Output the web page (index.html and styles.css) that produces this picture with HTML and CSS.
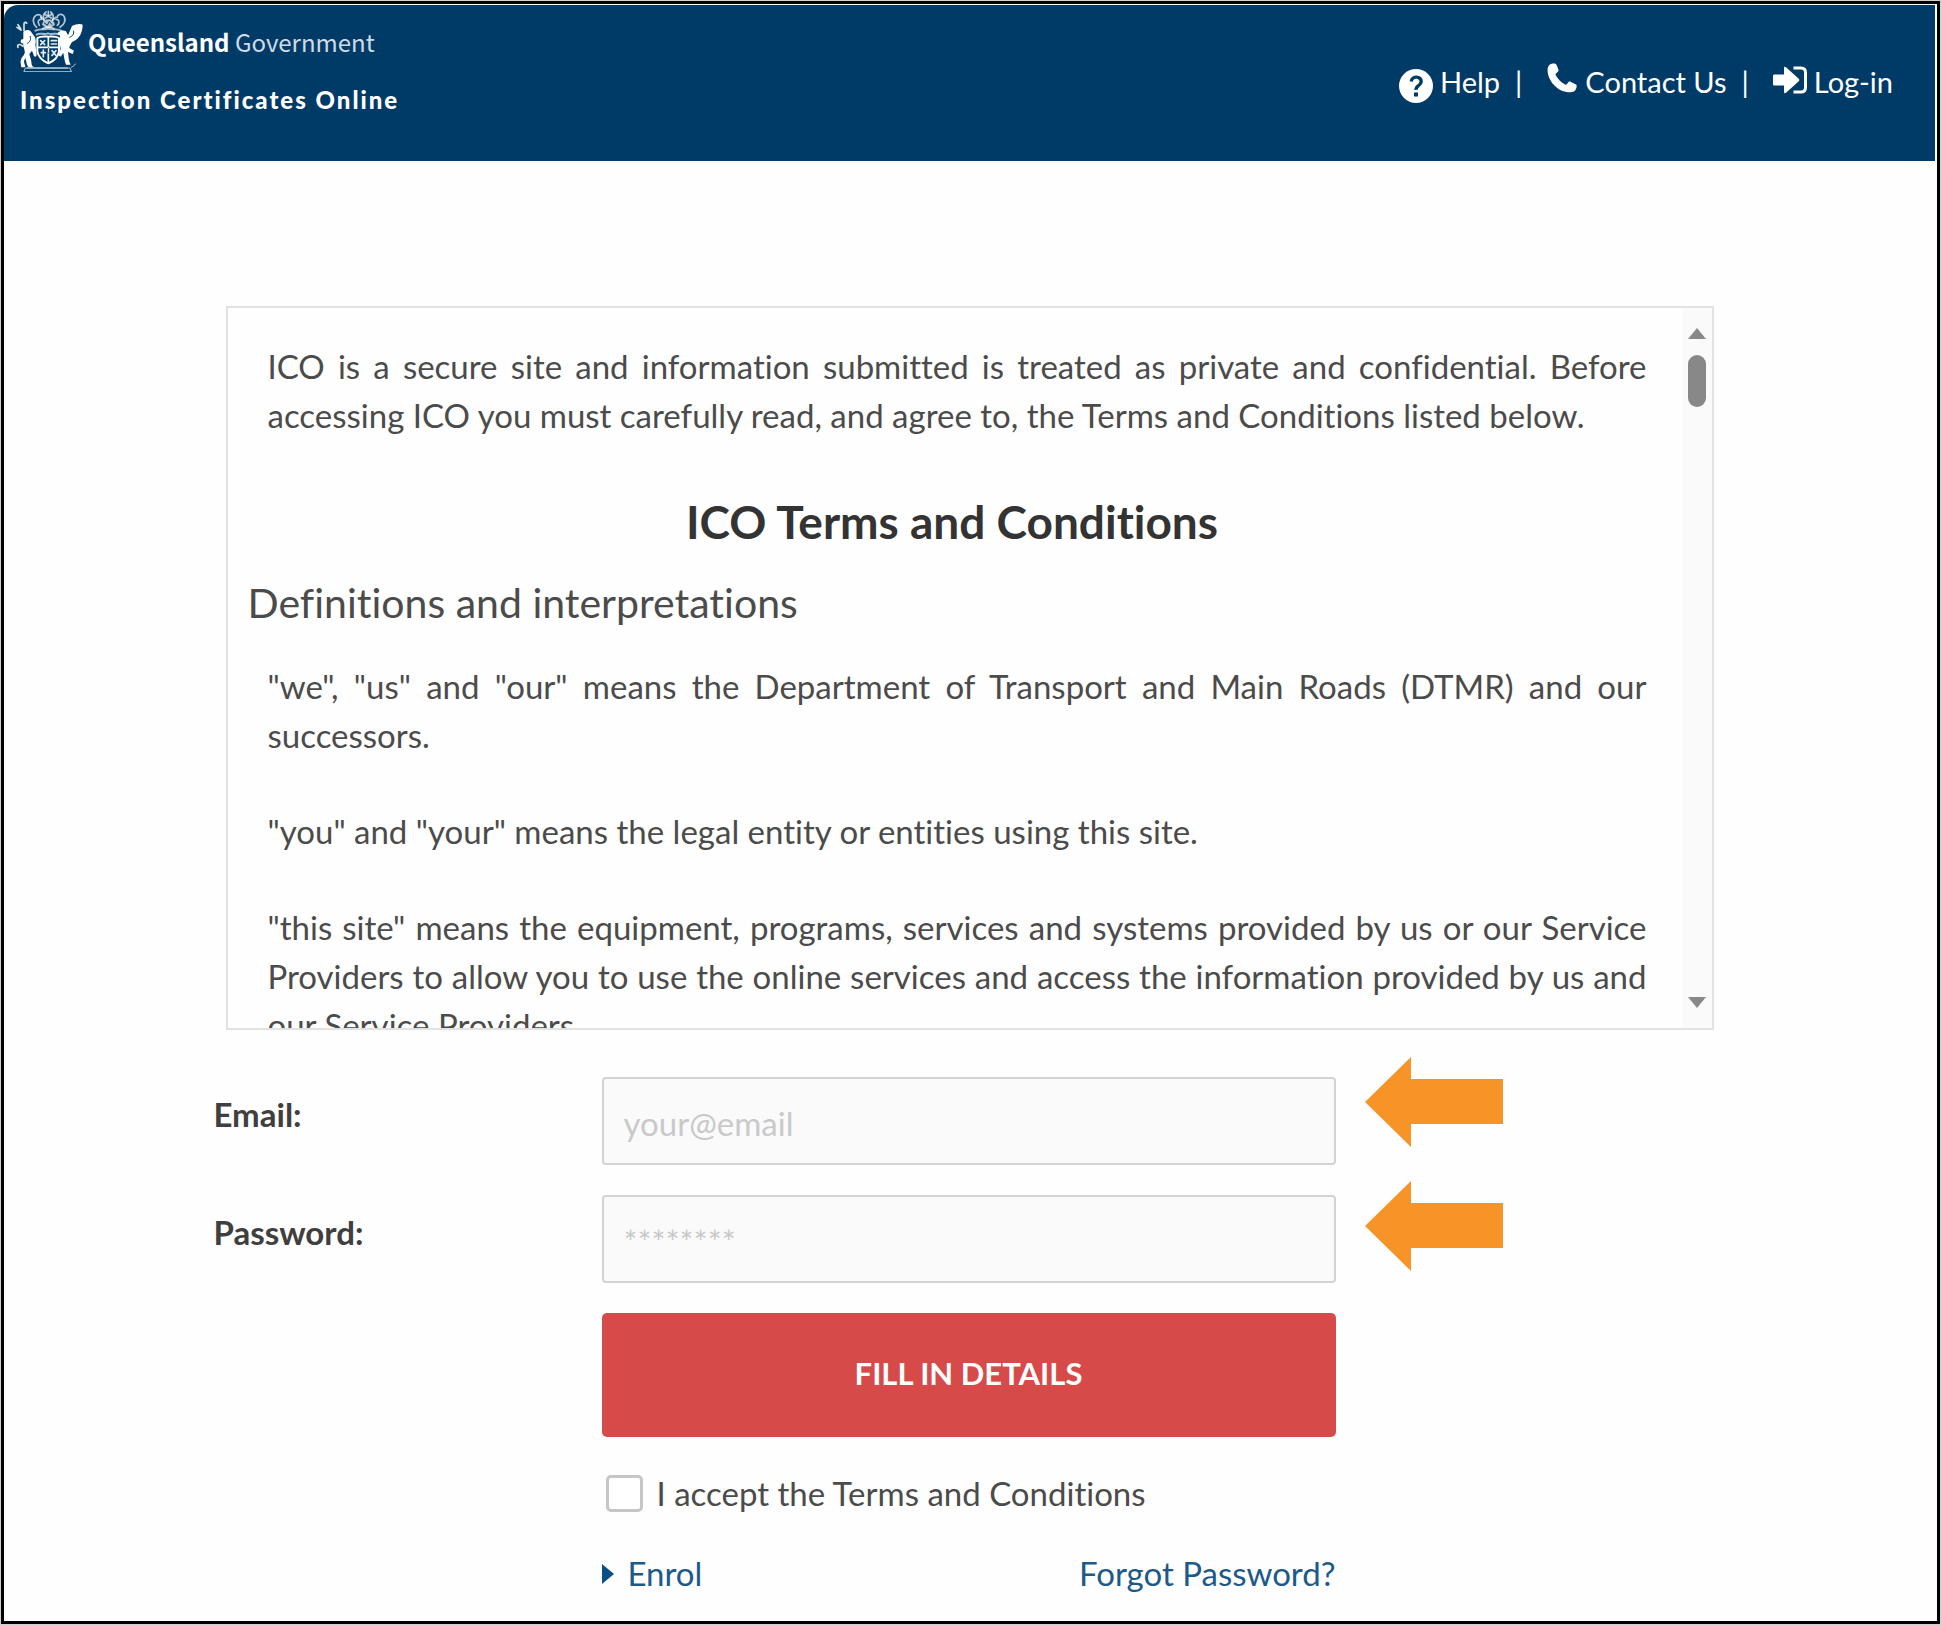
FILE: index.html
```html
<!DOCTYPE html>
<html lang="en">
<head>
<meta charset="utf-8">
<meta name="viewport" content="width=device-width, initial-scale=1">
<title>Inspection Certificates Online</title>
<link rel="stylesheet" href="styles.css">
</head>
<body>
<div class="page">
  <header class="site-header">
    <div class="brand">
      <div class="brand-logo">
        <svg class="crest" viewBox="0 0 201 186" aria-hidden="true">
          <g fill="none" stroke="#fff" stroke-linecap="round" stroke-linejoin="round">
            <path stroke-width="5" opacity=".7" d="M62 52C50 42 48 24 60 16c8-5 18 0 16 8M132 52c14-8 20-24 10-36-8-6-18-2-18 6M70 46c-6-10-4-18 6-18M124 46c8-8 6-18-4-18M84 30c-4-10-2-18 6-24M110 30c4-10 2-18-6-24M97 4v14M80 56c8-6 26-6 34 0"/>
            <path stroke-width="6" opacity=".65" d="M58 62c16-8 28-2 38-6 12 4 24-2 40 6M62 74c14-8 20 2 34-4 14 6 22-4 36 4M74 22l10 8M120 22l-10 8M88 14l18 10M106 14L88 24"/>
            <path stroke-width="6" d="M64 84c10-6 24-4 33-4 10 0 22-2 32 4v40c-2 18-14 28-32 36-18-8-30-18-33-36z"/>
            <path stroke-width="5" d="M97 82v74M66 112h62"/>
            <path stroke-width="5" opacity=".9" d="M74 92l12 12M86 92L74 104M106 92h16M106 102h16M82 120v20M76 128h12M108 122l12 14M120 122l-12 14"/>
            <path stroke-width="3" opacity=".7" d="M26 170c-2-4-8-4-10-12M24 184l4-10h134l4 10zM34 174h120M166 172c4-4 10-4 12-10"/>
          </g>
          <path fill="#fff" opacity=".7" d="M78 44c2-10 8-16 19-16s18 6 20 16c-6 6-10 4-12 10H90c-2-6-8-4-12-10z"/>
          <path fill="none" stroke="#003b68" stroke-width="3" d="M84 38l10 8 6-12 8 10"/>
          <path fill="#fff" d="M22 66c6-8 16-8 22-2l12 16c4 8 4 16 2 24l4 28c0 8-4 10-8 6l-6-16-8 10 4 14c4 10 0 20 10 26H38c-8-8-6-20-10-28l-4 10c0 8 4 10 4 18H16c-2-12-4-20 2-30 6-8 10-12 8-20-2-10-6-14-4-22-6 2-8-2-8-6 0-6 4-6 8-8z"/>
          <path fill="none" stroke="#fff" stroke-width="5" stroke-linecap="round" opacity=".85" d="M6 44l8 12M3 52l12 8M24 62V42c0-6 6-6 8-2M20 108c-10-8-18-4-14 4"/>
          <path fill="#fff" d="M168 48c10-6 26-8 32-4 0 14-4 28-12 38-6 8-14 12-20 14-4 8-8 12-8 18l14 8-4 10-14-6c2 16 2 28 8 38h-14c-4-10-6-24-8-36l-8 12-6-4 6-20-4-22c0-8 4-14 2-20-6 2-10-4-4-8 6-6 16-6 22-2l6 12z"/>
          <path fill="none" stroke="#003b68" stroke-width="3" d="M172 62c4 10-4 18-12 20M42 78c4 10 0 18-8 22M98 112c-6 6-6 14 0 18"/>
        </svg>
        <span class="gov"><strong>Queensland</strong> <span class="gov-light">Government</span></span>
      </div>
      <div class="app-name">Inspection Certificates Online</div>
    </div>
    <nav class="site-nav" aria-label="Support">
      <a class="nav-link" href="#help">
        <svg class="nav-icon help" viewBox="0 0 34 34" aria-hidden="true"><circle cx="17" cy="17" r="17" fill="#fff"/><path d="M12.200 12.500c.8-6 10.200-5.600 10 .2-.2 4-5.400 3.800-5.200 8.200" fill="none" stroke="#003b68" stroke-width="3.400"/><rect x="15" y="23.500" width="4" height="4" fill="#003b68"/></svg>
        <span>Help</span>
      </a>
      <span class="bar" aria-hidden="true">|</span>
      <a class="nav-link" href="#contact">
        <svg class="nav-icon phone" viewBox="0 0 32 32" aria-hidden="true"><path fill="#fff" d="M5 .8C8 0 9.500.5 10.200 2l2 5c.4 1.400-.2 2.400-2 3.600-1.200.9-1.200 1.700-.6 2.800 2.200 4 5.200 7 9.200 9.200 1.200.6 2 .4 2.800-.6 1.600-2.200 2.400-2.500 4-1.800l4.800 2.500c1.400.8 1.500 1.800 1 3.600-.8 3.200-3 4.900-6.600 4.900C11.500 31.200.8 19 .6 7.600.6 4 2 1.600 5 .8z"/></svg>
        <span>Contact Us</span>
      </a>
      <span class="bar" aria-hidden="true">|</span>
      <a class="nav-link" href="#login">
        <svg class="nav-icon login" viewBox="0 0 34 28" aria-hidden="true"><path fill="#fff" d="M1.500 8.500H11V2.200c0-1.500 1-1.800 2-.9l12.500 11.300c1 1 1 1.800 0 2.800L13 26.700c-1 .9-2 .6-2-.9V19.500H1.500C.5 19.500 0 19 0 18v-8c0-1 .5-1.500 1.500-1.500z"/><path fill="none" stroke="#fff" stroke-width="3" d="M20.500 2H28c3 0 4.500 1.500 4.500 4.500v15c0 3-1.500 4.500-4.500 4.500h-7.500"/></svg>
        <span>Log-in</span>
      </a>
    </nav>
  </header>

  <main class="content">
    <section class="terms" aria-label="Terms and Conditions">
      <div class="terms-text">
        <p>ICO is a secure site and information submitted is treated as private and confidential. Before accessing ICO you must carefully read, and agree to, the Terms and Conditions listed below.</p>
        <h2>ICO Terms and Conditions</h2>
        <h3>Definitions and interpretations</h3>
        <p>"we", "us" and "our" means the Department of Transport and Main Roads (DTMR) and our successors.</p>
        <p>"you" and "your" means the legal entity or entities using this site.</p>
        <p>"this site" means the equipment, programs, services and systems provided by us or our Service Providers to allow you to use the online services and access the information provided by us and our Service Providers.</p>
      </div>
      <div class="scroll-rail" aria-hidden="true">
        <span class="scroll-up"></span>
        <span class="scroll-thumb"></span>
        <span class="scroll-down"></span>
      </div>
    </section>

    <form class="login-form">
      <label class="field-label" for="email">Email:</label>
      <input class="field" id="email" type="email" placeholder="your@email">
      <label class="field-label" for="password">Password:</label>
      <input class="field" id="password" type="password" placeholder="********">
      <button class="submit" type="button">FILL IN DETAILS</button>
      <label class="accept"><input class="tick" type="checkbox"><span>I accept the Terms and Conditions</span></label>
      <div class="links">
        <a class="enrol" href="#enrol"><svg class="caret" viewBox="0 0 12 20" aria-hidden="true"><path fill="#0b4f86" d="M0 0l12 10L0 20z"/></svg>Enrol</a>
        <a href="#forgot">Forgot Password?</a>
      </div>
      <div class="pointers" aria-hidden="true">
        <svg class="pointer" viewBox="0 0 138 90"><path fill="#f79427" d="M0 45L46 0v22h92v45H46v23z"/></svg>
        <svg class="pointer" viewBox="0 0 138 90"><path fill="#f79427" d="M0 45L46 0v22h92v45H46v23z"/></svg>
      </div>
    </form>
  </main>
</div>
</body>
</html>
```
FILE: styles.css
```css
* { box-sizing: border-box; }

body {
  margin: 0;
  padding: 1px;
  background: #d0d0d0;
  color: #4b4b4b;
  font-family: "Lato", "Liberation Sans", sans-serif;
  font-size: 33px;
  line-height: 49px;
  font-variant-ligatures: none;
}

.page {
  min-height: calc(100vh - 2px);
  padding-right: 2px;
  border: 3px solid #000;
  background: #fefefe;
}

.site-header {
  display: flex;
  justify-content: space-between;
  align-items: flex-start;
  margin-top: 1px;
  padding: 5px 42px 0 12px;
  height: 156px;
  border-top-left-radius: 14px;
  background: #003b68;
  color: #fff;
}

.brand-logo {
  display: flex;
  align-items: center;
  gap: 5px;
}

.crest {
  width: 67px;
  height: 62px;
}

.gov {
  padding-top: 2px;
  font-family: "Noto Sans CJK SC", "Noto Sans", sans-serif;
  font-size: 24px;
  line-height: 40px;
}

.gov-light { color: #cfdbe6; }

.app-name {
  margin-top: 11px;
  padding-left: 4px;
  font-size: 24px;
  line-height: 34px;
  font-weight: 900;
  letter-spacing: 2px;
}

.site-nav {
  display: flex;
  align-items: center;
  margin-top: 48px;
  font-size: 29px;
  line-height: 48px;
}

.nav-link {
  display: flex;
  align-items: center;
  gap: 7px;
  color: #fff;
  text-decoration: none;
}

.bar { padding: 0 24px 0 15px; }

.nav-icon { width: 34px; }
.help { height: 34px; margin-top: 8px; }
.phone { height: 30px; width: 32px; margin-bottom: 8px; }
.login { height: 28px; margin-bottom: 4px; }

.content {
  max-width: 1512px;
  margin: 0 auto;
  padding-bottom: 10px;
}

.terms {
  display: flex;
  height: 724px;
  margin: 145px 12px 0;
  border: 2px solid #e2e2e2;
}

.terms-text {
  flex: 1;
  padding: 34px 35px 0 40px;
  overflow-y: auto;
  scrollbar-width: none;
  text-align: justify;
}

.terms-text p { margin: 0 0 47px; }

.terms-text h2 {
  margin: 54px 0 29px -10px;
  color: #333;
  font-size: 46px;
  line-height: 56px;
  font-weight: 700;
  text-align: center;
}

.terms-text h3 {
  margin: 0 0 35px -20px;
  font-size: 41px;
  line-height: 48px;
  font-weight: 400;
}

.scroll-rail {
  display: flex;
  flex-direction: column;
  align-items: center;
  width: 30px;
  padding: 20px 6px;
  background: #fafafa;
}

.scroll-up,
.scroll-down {
  border: 9px solid transparent;
}
.scroll-up { border-top: 0; border-bottom: 11px solid #888; }
.scroll-down { margin-top: auto; border-bottom: 0; border-top: 11px solid #888; }

.scroll-thumb {
  width: 18px;
  height: 52px;
  margin-top: 16px;
  border-radius: 9px;
  background: #888;
}

.login-form {
  position: relative;
  display: grid;
  grid-template-columns: 388px 734px;
  margin-top: 47px;
}

.field-label {
  color: #3f3f3f;
  font-weight: 700;
  padding-top: 13px;
}

.field {
  width: 100%;
  height: 88px;
  margin-bottom: 30px;
  padding: 4px 20px 0;
  border: 2px solid #d3d3d3;
  border-radius: 4px;
  background: #fafafa;
  color: #4b4b4b;
  font: inherit;
}

.field::placeholder { color: #c9c9c9; opacity: 1; }

.submit,
.accept,
.links { grid-column: 2; }

.submit {
  height: 124px;
  padding-bottom: 4px;
  border: 0;
  border-radius: 5px;
  background: #d64a49;
  color: #fff;
  font: inherit;
  font-size: 31px;
  font-weight: 700;
}

.accept {
  display: flex;
  align-items: center;
  gap: 14px;
  margin-top: 32px;
  padding-left: 4px;
}

.tick {
  appearance: none;
  width: 37px;
  height: 37px;
  margin: 0;
  border: 3px solid #c6c6c6;
  border-radius: 5px;
  background: #fff;
}

.tick:checked { background: #1c5a8a; }

.links {
  display: flex;
  justify-content: space-between;
  margin-top: 31px;
}

.links a { color: #1c5a8a; text-decoration: none; }

.enrol {
  display: flex;
  align-items: center;
  gap: 14px;
}

.caret { width: 12px; height: 20px; }

.pointers {
  position: absolute;
  top: -20px;
  left: 1151px;
  display: flex;
  flex-direction: column;
  gap: 34px;
}

.pointer { width: 138px; height: 90px; }
```
